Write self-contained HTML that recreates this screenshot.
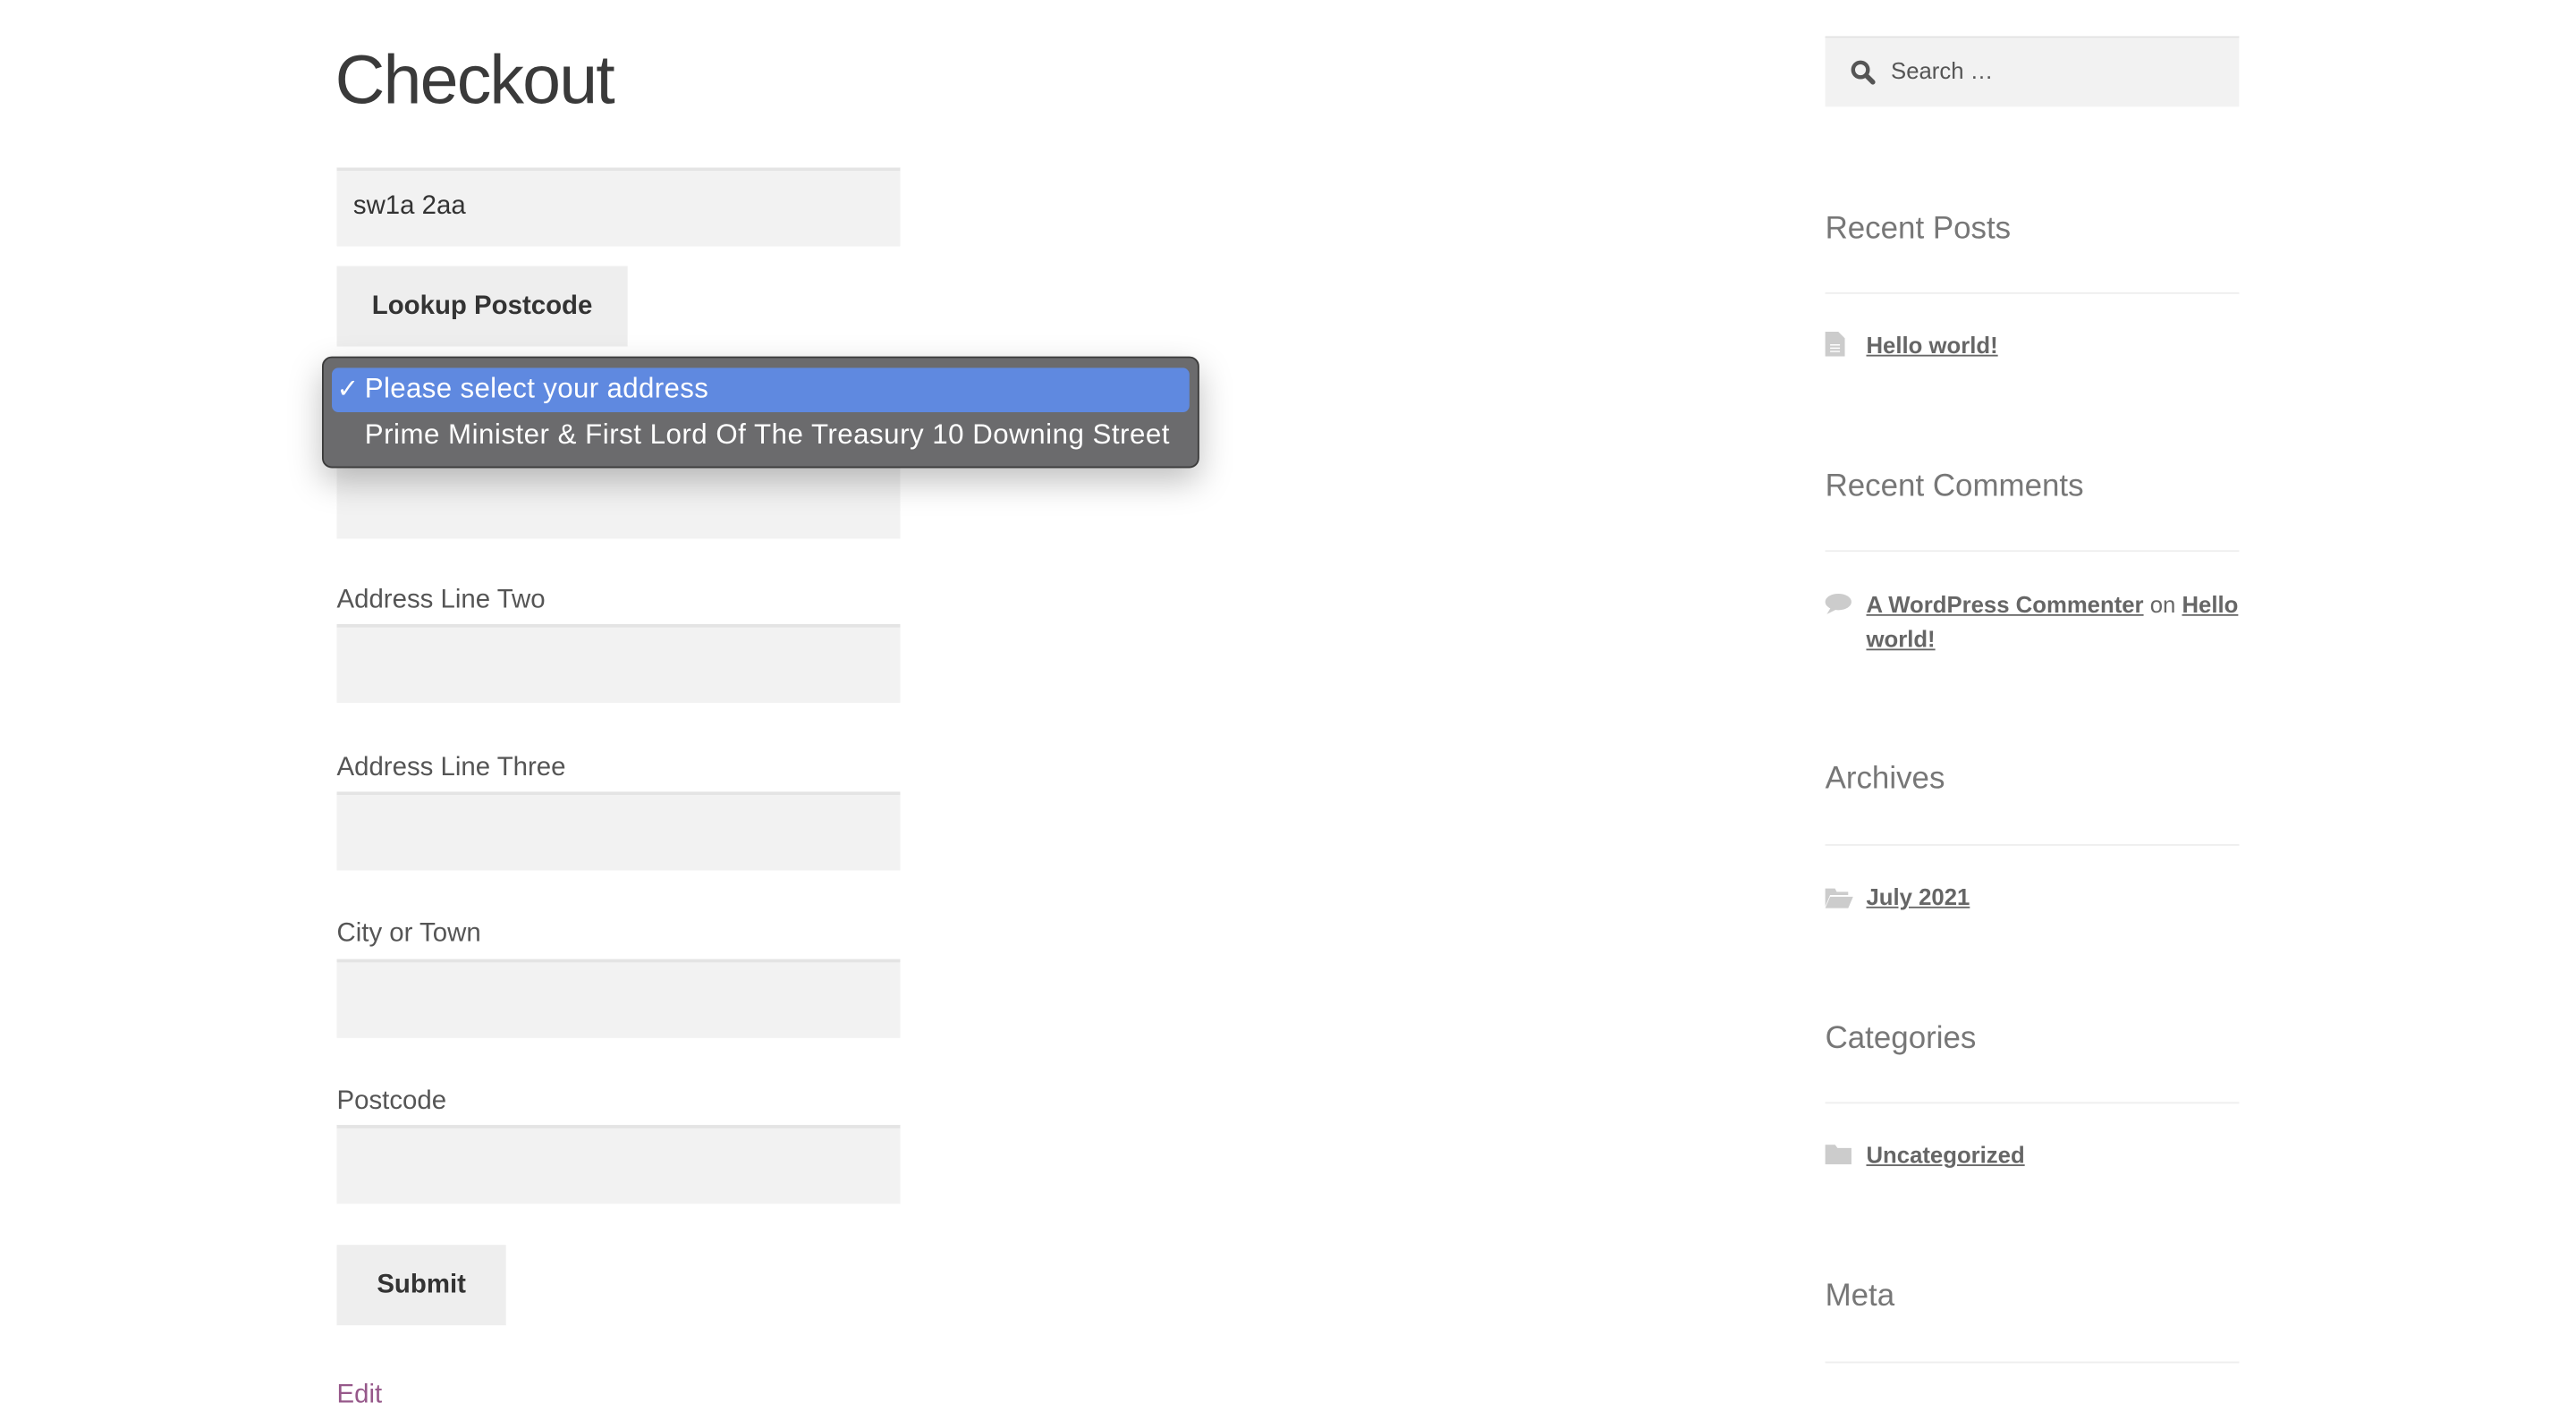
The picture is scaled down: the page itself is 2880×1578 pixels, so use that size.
<!DOCTYPE html>
<html><head><meta charset="utf-8"><style>
html,body{margin:0;padding:0;background:#fff;width:2880px;height:1574px;overflow:hidden}
#w{position:absolute;left:0;top:0;width:1568px;height:857px;transform:scale(1.8367);transform-origin:0 0;font-family:"Liberation Sans",sans-serif;color:#404040}
.a{position:absolute}
.in{position:absolute;left:205px;width:343px;height:48px;background:#f2f2f2;box-shadow:inset 0 2px 0 #e4e4e4}
.lbl{position:absolute;left:205px;font-size:16px;color:#555}
.btn{position:absolute;left:205px;height:49px;background:#eee;font-weight:bold;font-size:16px;color:#333;text-align:center;line-height:49px}
.h{position:absolute;left:1111px;font-size:19px;color:#777;font-weight:300}
.ln{position:absolute;left:1111px;width:252px;height:1px;background:#eee}
.lk{position:absolute;left:1136px;font-size:14px;font-weight:bold;color:#666;text-decoration:underline;line-height:21px}
</style></head><body><div id="w">
<div class="a" style="left:204px;top:25px;font-size:42px;color:#3a3a3a;letter-spacing:-1px">Checkout</div>
<div class="in" style="top:102px"></div>
<div class="a" style="left:215px;top:117px;font-size:16px;color:#333">sw1a 2aa</div>
<div class="btn" style="top:162px;width:177px">Lookup Postcode</div>
<div class="in" style="top:280px"></div>
<div class="lbl" style="top:357px">Address Line Two</div>
<div class="in" style="top:380px"></div>
<div class="lbl" style="top:459px">Address Line Three</div>
<div class="in" style="top:482px"></div>
<div class="lbl" style="top:560px">City or Town</div>
<div class="in" style="top:584px"></div>
<div class="lbl" style="top:662px">Postcode</div>
<div class="in" style="top:685px"></div>
<div class="btn" style="top:758px;width:103px">Submit</div>
<div class="a" style="left:205px;top:841px;font-size:16px;color:#96588a">Edit</div>

<div class="a" style="left:196px;top:217px;width:532px;height:66px;background:#6b6b6d;border:1px solid #3a3a3a;border-radius:6px;box-shadow:0 8px 20px rgba(0,0,0,.25)"></div>
<div class="a" style="left:202px;top:224px;width:522px;height:27px;background:#5f89e0;border-radius:4px"></div>
<div class="a" style="left:205px;top:228px;font-size:16px;color:#fff;line-height:20px">✓</div>
<div class="a" style="left:222px;top:226px;font-size:17px;color:#fff;line-height:22px;letter-spacing:.2px">Please select your address</div>
<div class="a" style="left:222px;top:254px;font-size:17px;color:#fff;line-height:22px;letter-spacing:.28px">Prime Minister &amp; First Lord Of The Treasury 10 Downing Street</div>

<div class="a" style="left:1111px;top:22px;width:252px;height:43px;background:#f2f2f2;box-shadow:inset 0 1px 0 #e2e2e2"></div>
<svg class="a" style="left:1126px;top:36px" width="16" height="16" viewBox="0 0 16 16"><circle cx="6.5" cy="6.5" r="4.5" fill="none" stroke="#555" stroke-width="2.4"/><path d="M10 10l4 4" stroke="#555" stroke-width="3" stroke-linecap="round"/></svg>
<div class="a" style="left:1151px;top:35px;font-size:14px;color:#555">Search …</div>

<div class="h" style="top:129px">Recent Posts</div>
<div class="ln" style="top:178px"></div>
<svg class="a" style="left:1111px;top:202px" width="12" height="15" viewBox="0 0 12 15"><path d="M0 0h8l4 4v11H0z" fill="#ccc"/><path d="M3 8h6M3 10h6M3 12h6" stroke="#fff" stroke-width=".8"/></svg>
<div class="lk" style="top:200px">Hello world!</div>

<div class="h" style="top:286px">Recent Comments</div>
<div class="ln" style="top:335px"></div>
<svg class="a" style="left:1111px;top:361px" width="16" height="14" viewBox="0 0 16 14"><ellipse cx="8" cy="5.5" rx="8" ry="5" fill="#ccc"/><path d="M1 13l3-5 3 2z" fill="#ccc"/></svg>
<div class="lk" style="top:358px;width:230px">A WordPress Commenter<span style="font-weight:normal;display:inline-block;text-decoration:none">&nbsp;on&nbsp;</span>Hello world!</div>

<div class="h" style="top:464px">Archives</div>
<div class="ln" style="top:514px"></div>
<svg class="a" style="left:1111px;top:540px" width="17" height="13" viewBox="0 0 17 13"><path d="M0 1h6l1 2h7v2H3L0 12z" fill="#ccc"/><path d="M3 6h14l-3 7H0z" fill="#ccc"/></svg>
<div class="lk" style="top:536px">July 2021</div>

<div class="h" style="top:622px">Categories</div>
<div class="ln" style="top:671px"></div>
<svg class="a" style="left:1111px;top:697px" width="16" height="12" viewBox="0 0 16 12"><path d="M0 0h6l1.5 2H16v10H0z" fill="#ccc"/></svg>
<div class="lk" style="top:693px">Uncategorized</div>

<div class="h" style="top:779px">Meta</div>
<div class="ln" style="top:829px"></div>
</div></body></html>
